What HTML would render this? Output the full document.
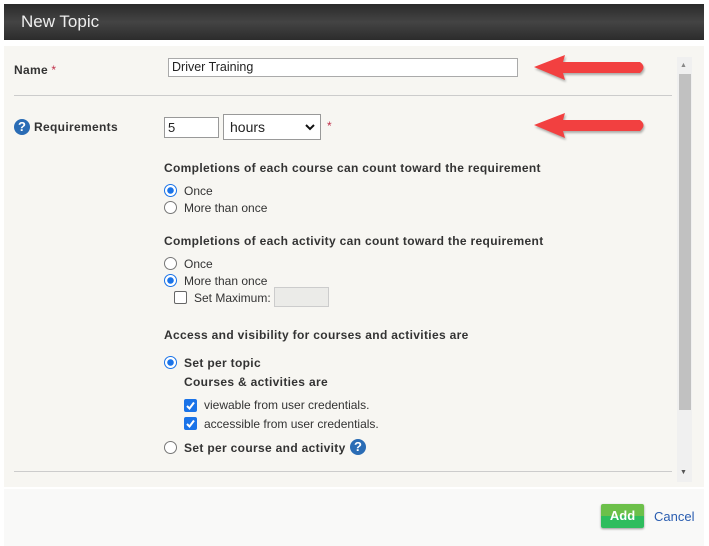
<!DOCTYPE html>
<html><head><style>
body{margin:0;width:709px;height:546px;background:#fff;font-family:"Liberation Sans",sans-serif;font-size:12px;color:#333;position:relative;overflow:hidden}
.a{position:absolute}
.hdr{left:4px;top:4px;width:700px;height:36px;background:linear-gradient(#2a2a2a,#444 50%,#2c2c2c);color:#eee;font-size:17px}
.panel{left:4px;top:46px;width:700px;height:441px;background:#f7f6f2}
.foot{left:4px;top:489px;width:700px;height:57px;background:#f9f9f8}
b{font-weight:bold;color:#333;letter-spacing:0.33px}
.radio{width:11px;height:11px;border:1px solid #777;border-radius:50%;background:#fff}
.radio.on{border-color:#1a73e8;background:radial-gradient(#1a73e8 3px,#fff 3.5px)}
.cb{width:11px;height:11px;border:1px solid #666;border-radius:2px;background:#fff}
.cb.on{background:#1a73e8;border-color:#1a73e8}
.q{width:16px;height:16px;border-radius:50%;background:#2a6cb5;color:#fff;font-weight:bold;font-size:13px;text-align:center;line-height:16px}
.red{color:#c0304a}
</style></head><body>
<div class="a hdr"><span class="a" style="left:17px;top:8px">New Topic</span></div>
<div class="a panel"></div>
<div class="a foot"></div>
<div class="a" style="left:14px;top:63px"><b>Name</b> <span class="red">*</span></div>
<div class="a" style="left:168px;top:58px;width:345px;height:17px;border:1px solid #aaa;background:#fff;padding-left:3px;line-height:17px;color:#222;font-size:12.5px">Driver Training</div>
<div class="a" style="left:14px;top:95px;width:658px;height:1px;background:#ccc"></div>
<div class="a q" style="left:14px;top:119px">?</div>
<div class="a" style="left:34px;top:120px"><b>Requirements</b></div>
<div class="a" style="left:164px;top:117px;width:50px;height:19px;border:1px solid #999;background:#fff;padding-left:3px;line-height:19px;color:#222;font-size:13px">5</div>
<div class="a" style="left:223px;top:114px;width:98px;height:26px;border:1px solid #999;background:#fff;line-height:24px;padding-left:6px;box-sizing:border-box;color:#222;font-size:14px">hours<svg class="a" style="right:5px;top:9px" width="10" height="7"><path d="M1 1 L5 5 L9 1" fill="none" stroke="#111" stroke-width="2"/></svg></div>
<div class="a red" style="left:327px;top:119px">*</div>
<div class="a" style="left:164px;top:161px"><b>Completions of each course can count toward the requirement</b></div>
<div class="a radio on" style="left:164px;top:184px"></div><div class="a" style="left:184px;top:184px">Once</div>
<div class="a radio" style="left:164px;top:201px"></div><div class="a" style="left:184px;top:201px">More than once</div>
<div class="a" style="left:164px;top:234px"><b>Completions of each activity can count toward the requirement</b></div>
<div class="a radio" style="left:164px;top:257px"></div><div class="a" style="left:184px;top:257px">Once</div>
<div class="a radio on" style="left:164px;top:274px"></div><div class="a" style="left:184px;top:274px">More than once</div>
<div class="a cb" style="left:174px;top:291px"></div><div class="a" style="left:194px;top:291px">Set Maximum:</div>
<div class="a" style="left:274px;top:287px;width:53px;height:18px;border:1px solid #ccc;background:#ebebe8"></div>
<div class="a" style="left:164px;top:328px"><b>Access and visibility for courses and activities are</b></div>
<div class="a radio on" style="left:164px;top:356px"></div><div class="a" style="left:184px;top:356px"><b>Set per topic</b></div>
<div class="a" style="left:184px;top:375px"><b>Courses &amp; activities are</b></div>
<div class="a cb on" style="left:184px;top:399px"></div><svg class="a" style="left:184px;top:399px" width="13" height="13"><path d="M3 7 L5.5 9.5 L10 3.5" fill="none" stroke="#fff" stroke-width="2"/></svg><div class="a" style="left:204px;top:398px">viewable from user credentials.</div>
<div class="a cb on" style="left:184px;top:417px"></div><svg class="a" style="left:184px;top:417px" width="13" height="13"><path d="M3 7 L5.5 9.5 L10 3.5" fill="none" stroke="#fff" stroke-width="2"/></svg><div class="a" style="left:204px;top:417px">accessible from user credentials.</div>
<div class="a radio" style="left:164px;top:441px"></div><div class="a" style="left:184px;top:441px"><b>Set per course and activity</b></div>
<div class="a q" style="left:350px;top:439px">?</div>
<div class="a" style="left:14px;top:471px;width:658px;height:1px;background:#ccc"></div>
<div class="a" style="left:677px;top:57px;width:15px;height:425px;background:#f0f0f0"></div>
<div class="a" style="left:679px;top:74px;width:12px;height:336px;background:#c1c1c1"></div>
<div class="a" style="left:680px;top:62px;font-size:7px;color:#888">▲</div>
<div class="a" style="left:680px;top:469px;font-size:7px;color:#555">▼</div>
<svg class="a" style="left:530px;top:52px" width="120" height="90"><g fill="#f24040" style="filter:drop-shadow(1px 2px 1px rgba(0,0,0,.3))"><path d="M4 15 L35 3 L33 10 L110 10 Q117 15 110 21 L33 21 L35 28 Z"/><path d="M4 73 L35 61 L33 68 L110 68 Q117 73 110 79 L33 79 L35 86 Z"/></g></svg>
<div class="a" style="left:601px;top:504px;width:43px;height:24px;background:linear-gradient(#6cc04a 50%,#2ebd5e 50%);border-radius:2px;color:#fff;font-weight:bold;font-size:13px;text-align:center;line-height:24px;box-shadow:0 1px 2px rgba(0,0,0,.4)">Add</div>
<div class="a" style="left:654px;top:509px;color:#2a5db0;font-size:13px">Cancel</div>
</body></html>
